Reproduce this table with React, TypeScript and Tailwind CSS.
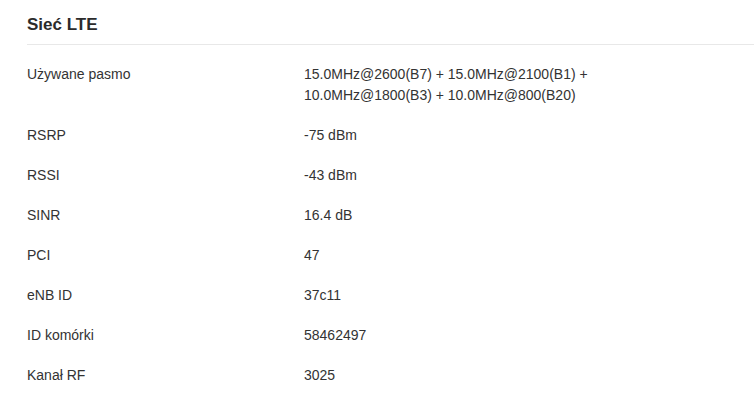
const rows: { label: string; value: React.ReactNode }[] = [
  {
    label: "Używane pasmo",
    value: (
      <>
        15.0MHz@2600(B7) + 15.0MHz@2100(B1) +
        <br />
        10.0MHz@1800(B3) + 10.0MHz@800(B20)
      </>
    ),
  },
  { label: "RSRP", value: "-75 dBm" },
  { label: "RSSI", value: "-43 dBm" },
  { label: "SINR", value: "16.4 dB" },
  { label: "PCI", value: "47" },
  { label: "eNB ID", value: "37c11" },
  { label: "ID komórki", value: "58462497" },
  { label: "Kanał RF", value: "3025" },
];

export default function App() {
  return (
    <div
      className="min-h-screen bg-white pl-[27px] text-[#333]"
      style={{ fontFamily: '"Liberation Sans", Arial, sans-serif' }}
    >
      <div className="border-b border-[#e8e8e8] pt-[15px] pb-[9px]">
        <h2 className="text-[17px] leading-[20px] font-bold text-[#2b2b2b]">Sieć LTE</h2>
      </div>
      <div className="mt-[9px]">
        {rows.map((row) => (
          <div key={row.label} className="flex py-[9.5px] text-[14px] leading-[21px]">
            <div className="w-[277px] shrink-0">{row.label}</div>
            <div>{row.value}</div>
          </div>
        ))}
      </div>
    </div>
  );
}
